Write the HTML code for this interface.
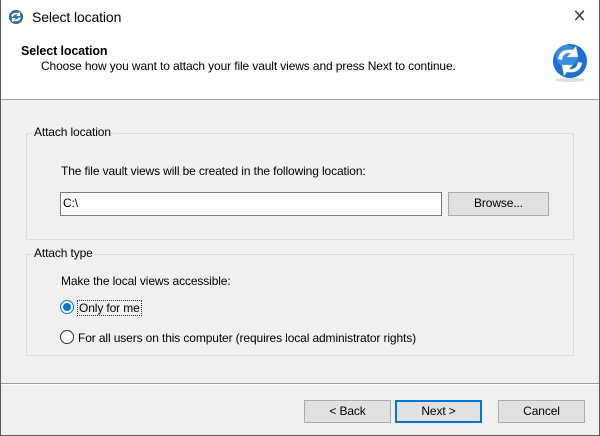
<!DOCTYPE html>
<html><head><style>
*{margin:0;padding:0;box-sizing:border-box}
body{width:600px;height:436px;overflow:hidden;font-family:"Liberation Sans",sans-serif;font-size:12px;color:#000;background:#f0f0f0;position:relative;letter-spacing:-0.12px}
.a{position:absolute;white-space:nowrap}
.win{position:absolute;left:0;top:0;width:600px;height:436px;border:1px solid #5a5a5a;border-top:none}
.gb{position:absolute;border:1px solid #dcdcdc}
.btn{position:absolute;background:#e1e1e1;border:1px solid #adadad;text-align:center;line-height:21px}
</style></head><body>
<div class="a" style="left:0;top:0;width:600px;height:99px;background:#fff"></div>
<div class="a" style="left:0;top:99px;width:600px;height:1px;background:#a0a0a0"></div>
<svg class="a" style="left:8px;top:9px" width="16" height="16" viewBox="0 0 16 16"><circle cx="8" cy="8" r="6.5" fill="#2a78c8" stroke="#555" stroke-width="1"/><path d="M3 7 Q5 3 10 4 L12 3 L12 7 L8 7 L10 5.5 Q6 5 5 8Z M13 9 Q11 13 6 12 L4 13 L4 9 L8 9 L6 10.5 Q10 11 11 8Z" fill="#fff"/></svg>
<div class="a" style="left:32px;top:9px;font-size:14px;color:#000">Select location</div>
<div class="a" style="left:572px;top:6px;font-size:18px;color:#444;transform:scaleX(0.9)">✕</div>
<div class="a" style="left:21px;top:44px;font-weight:bold;font-size:12.5px">Select location</div>
<div class="a" style="left:41px;top:59px">Choose how you want to attach your file vault views and press Next to continue.</div>
<svg class="a" style="left:551px;top:42px" width="38" height="40" viewBox="0 0 38 40"><ellipse cx="19" cy="38" rx="15" ry="2" fill="#ddd"/><circle cx="19" cy="19" r="17" fill="#1e6fd0"/><circle cx="16" cy="14" r="11" fill="#4aa0f0" opacity=".6"/><path d="M7 17 Q9 6 22 8 L25 4 L27 15 L16 15 L20 11 Q12 10 11 18Z M31 21 Q29 32 16 30 L13 34 L11 23 L22 23 L18 27 Q26 28 27 20Z" fill="#fff" stroke="#bbb" stroke-width=".5"/></svg>
<div class="gb" style="left:26px;top:133px;width:548px;height:107px"></div>
<div class="a" style="left:32px;top:125px;background:#f0f0f0;padding:0 2px">Attach location</div>
<div class="a" style="left:61px;top:164px">The file vault views will be created in the following location:</div>
<div class="a" style="left:60px;top:192px;width:382px;height:24px;background:#fff;border:1px solid #7a7a7a;padding:3px 2px">C:\</div>
<div class="btn" style="left:448px;top:192px;width:101px;height:24px">Browse...</div>
<div class="gb" style="left:26px;top:254px;width:548px;height:102px"></div>
<div class="a" style="left:32px;top:246px;background:#f0f0f0;padding:0 2px">Attach type</div>
<div class="a" style="left:61px;top:274px">Make the local views accessible:</div>
<div class="a" style="left:60px;top:300px;width:14px;height:14px;border:1px solid #0078d7;border-radius:50%;background:#fff"></div>
<div class="a" style="left:63px;top:303px;width:8px;height:8px;border-radius:50%;background:#0078d7"></div>
<div class="a" style="left:77px;top:300px;border:1px dotted #333;padding:0 1px;line-height:14px">Only for me</div>
<div class="a" style="left:60px;top:330px;width:14px;height:14px;border:1px solid #333;border-radius:50%;background:#fff"></div>
<div class="a" style="left:78px;top:331px">For all users on this computer (requires local administrator rights)</div>
<div class="a" style="left:0;top:383px;width:600px;height:1px;background:#a0a0a0"></div>
<div class="a" style="left:0;top:384px;width:600px;height:1px;background:#fff"></div>
<div class="btn" style="left:304px;top:400px;width:87px;height:23px">&lt; Back</div>
<div class="btn" style="left:395px;top:400px;width:87px;height:23px;border:2px solid #0078d7;line-height:19px">Next &gt;</div>
<div class="btn" style="left:498px;top:400px;width:87px;height:23px">Cancel</div>
<div class="win"></div>
</body></html>
